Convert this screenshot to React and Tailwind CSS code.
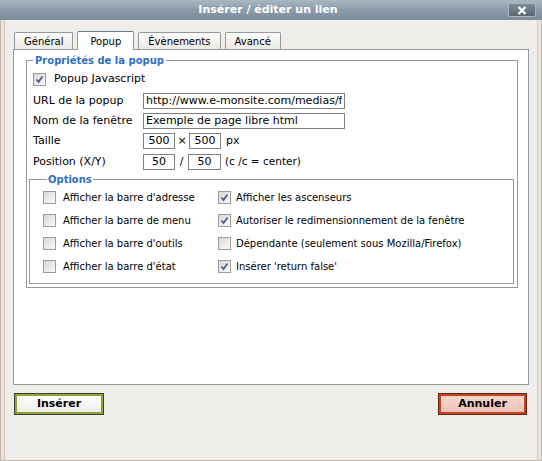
const FONT = "font-['DejaVu_Sans',sans-serif]"

function Check({ checked }) {
  return (
    <span className="inline-flex w-[13px] h-[13px] shrink-0 items-center justify-center border border-[#9c9c9c] bg-gradient-to-br from-[#d8d8d4] to-[#fafaf8]">
      {checked && (
        <svg width="9" height="9" viewBox="0 0 9 9">
          <path d="M1.5 4.5 L3.5 7 L7.5 1.5" fill="none" stroke="#4b5c96" strokeWidth="1.8" />
        </svg>
      )}
    </span>
  )
}

function Tab({ label, active }) {
  if (active) {
    return (
      <div className="relative z-10 -mb-px h-[19px] mt-[-1px] px-[12px] flex items-center bg-white border border-b-0 border-[#919b9c] border-t-[#6d7c8a] rounded-t-[2px]">
        {label}
      </div>
    )
  }
  return (
    <div className="h-[17px] px-[9px] flex items-center bg-gradient-to-b from-[#fbfbf9] to-[#ebeae5] border border-b-0 border-[#919b9c] rounded-t-[2px]">
      {label}
    </div>
  )
}

function Field({ value, w, center }) {
  return (
    <input
      readOnly
      value={value}
      className={`h-[16px] border border-[#7f7f7f] bg-white px-[2px] text-[11px] text-black outline-none ${FONT} ${w} ${center ? 'text-center' : ''}`}
    />
  )
}

const OPTIONS = [
  ["Afficher la barre d'adresse", false, 'Afficher les ascenseurs', true],
  ['Afficher la barre de menu', false, 'Autoriser le redimensionnement de la fenêtre', true],
  ["Afficher la barre d'outils", false, 'Dépendante (seulement sous Mozilla/Firefox)', false],
  ["Afficher la barre d'état", false, "Insérer 'return false'", true],
]

export default function App() {
  return (
    <div className={`w-[542px] h-[461px] flex flex-col text-[10px] text-black ${FONT}`}>
      {/* title bar */}
      <div className="relative h-[20px] shrink-0 flex items-center justify-center bg-gradient-to-b from-[#a9b7c3] via-[#8b9baa] to-[#7b8b99]">
        <span className="text-white font-bold text-[11px] -ml-[6px]">Insérer / éditer un lien</span>
        <div className="absolute right-[6px] top-[3px] w-[28px] h-[14px] flex items-center justify-center rounded-[2px] border border-[#a9b4be] bg-gradient-to-b from-[#7d8b97] to-[#5a6875]">
          <svg width="10" height="9" viewBox="0 0 10 9">
            <path d="M1.5 1 L8.5 8 M8.5 1 L1.5 8" stroke="white" strokeWidth="2.2" />
          </svg>
        </div>
      </div>

      {/* frame */}
      <div className="flex-1 flex flex-col border-x border-b border-[#c3b7ab] bg-[#e9e6e1] px-[3px]">
        <div className="flex-1 flex flex-col border-x border-[#cdc4ba] bg-[#efeeea] px-[8px]">
          {/* tabs */}
          <div className="flex items-end gap-[4px] pt-[12px] pl-[1px]">
            <Tab label="Général" />
            <Tab label="Popup" active />
            <Tab label="Évènements" />
            <Tab label="Avancé" />
          </div>

          {/* panel */}
          <div className="h-[336px] border border-[#919b9c] bg-white pt-[4px] pl-[12px] pr-[10px]">
            <fieldset className="border border-[#919b9c] px-[2px] pr-[3px] pb-[3px]">
              <legend className="ml-[4px] px-[2px] font-bold text-[#2e6fc0] leading-[13px]">Propriétés de la popup</legend>

              <div className="pl-[4px] text-[11px]">
                <div className="flex items-center gap-[8px] h-[13px] mt-[6px]">
                  <Check checked />
                  <span>Popup Javascript</span>
                </div>

                <div className="flex flex-col gap-[4px] mt-[7px]">
                  <div className="flex items-center h-[16px]">
                    <span className="w-[110px]">URL de la popup</span>
                    <Field value="http://www.e-monsite.com/medias/files/popup.html" w="w-[202px]" />
                  </div>
                  <div className="flex items-center h-[16px]">
                    <span className="w-[110px]">Nom de la fenêtre</span>
                    <Field value="Exemple de page libre html" w="w-[202px]" />
                  </div>
                  <div className="flex items-center h-[16px]">
                    <span className="w-[110px]">Taille</span>
                    <Field value="500" w="w-[32px]" center />
                    <span className="w-[14px] text-center">×</span>
                    <Field value="500" w="w-[32px]" center />
                    <span className="ml-[5px]">px</span>
                  </div>
                  <div className="flex items-center h-[16px] mt-[1px]">
                    <span className="w-[110px]">Position (X/Y)</span>
                    <Field value="50" w="w-[32px]" center />
                    <span className="w-[13px] text-center">/</span>
                    <Field value="50" w="w-[33px]" center />
                    <span className="ml-[4px] text-[10.5px]">(c /c = center)</span>
                  </div>
                </div>
              </div>

              <fieldset className="mt-[3px] border border-[#919b9c] pl-[13px] pb-[10px]">
                <legend className="ml-[4px] px-[1px] font-bold text-[#2e6fc0] leading-[13px]">Options</legend>
                <div className="flex flex-col gap-[10px] mt-[5px]">
                  {OPTIONS.map(([a, ac, b, bc], i) => (
                    <div key={i} className="flex items-center h-[13px]">
                      <div className="w-[175px] flex items-center gap-[7px]">
                        <Check checked={ac} />
                        <span>{a}</span>
                      </div>
                      <div className="flex items-center gap-[5px]">
                        <Check checked={bc} />
                        <span>{b}</span>
                      </div>
                    </div>
                  ))}
                </div>
              </fieldset>
            </fieldset>
          </div>

          {/* buttons */}
          <div className="flex justify-between mt-[8px] ml-[1px] mr-[2px]">
            <button className="w-[90px] h-[22px] border border-[#3e4030] shadow-[inset_0_0_0_2px_#8ea13c] bg-gradient-to-b from-white to-[#ecece6] font-bold text-[11px] text-black">
              Insérer
            </button>
            <button className="w-[89px] h-[22px] border border-[#5a2418] shadow-[inset_0_0_0_2px_#c9411d] bg-gradient-to-b from-[#f6d8d0] to-[#efc0b4] font-bold text-[11px] text-black">
              Annuler
            </button>
          </div>
        </div>
      </div>
    </div>
  )
}
